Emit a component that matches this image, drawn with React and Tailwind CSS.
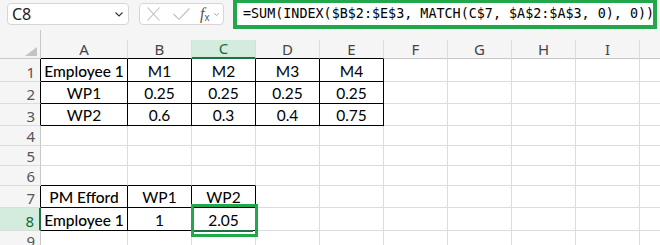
import React from "react";

function Cell({ w, h, text, br, bb, bold }) {
  const rc = br ? "border-r-black" : "border-r-[#dcdcdc]";
  const bc = bb ? "border-b-black" : "border-b-[#dcdcdc]";
  return (
    <div
      className={`${w} ${h} shrink-0 border-r border-b ${rc} ${bc} flex items-end justify-center pb-[2px] leading-none text-[15.5px] text-black whitespace-nowrap ${bold ? "font-medium" : ""}`}
    >
      {text}
    </div>
  );
}

const colW = ["w-[87px]", "w-[64px]", "w-[64px]", "w-[64px]", "w-[64px]", "w-[64px]", "w-[64px]", "w-[64px]", "w-[64px]", "w-[64px]"];
const letters = ["A", "B", "C", "D", "E", "F", "G", "H", "I", ""];

const rows = [
  { n: 1, h: "h-[23px]", vals: ["Employee 1", "M1", "M2", "M3", "M4"], br: 5, bb: 5, lb: true },
  { n: 2, h: "h-[22px]", vals: ["WP1", "0.25", "0.25", "0.25", "0.25"], br: 5, bb: 5, lb: true },
  { n: 3, h: "h-[22px]", vals: ["WP2", "0.6", "0.3", "0.4", "0.75"], br: 5, bb: 5, lb: true },
  { n: 4, h: "h-[20px]", vals: [], br: 0, bb: 0 },
  { n: 5, h: "h-[20px]", vals: [], br: 0, bb: 0 },
  { n: 6, h: "h-[20px]", vals: [], br: 0, bb: 3 },
  { n: 7, h: "h-[22px]", vals: ["PM Efford", "WP1", "WP2"], br: 3, bb: 3, lb: true },
  { n: 8, h: "h-[23px]", vals: ["Employee 1", "1", "2.05"], br: 3, bb: 3, sel: true },
  { n: 9, h: "h-[20px]", vals: [], br: 0, bb: 0 },
];

export default function App() {
  return (
    <div className="w-[660px] h-[245px] overflow-hidden relative bg-white font-['Lato',sans-serif]">
      {/* toolbar */}
      <div className="h-[30px] bg-[#f5f5f5] flex items-start">
        <div className="ml-[7px] mt-[3px] w-[122px] h-[22px] shrink-0 bg-white border border-[#d6d6d6] rounded-[4px] flex items-center justify-between pl-[4px] pr-[5px]">
          <span className="font-['Noto_Sans',sans-serif] text-[16px] text-[#222] leading-none">C8</span>
          <svg width="8" height="5" viewBox="0 0 8 5">
            <path d="M0.5 0.5 L4 4 L7.5 0.5" fill="none" stroke="#333" strokeWidth="1.1" />
          </svg>
        </div>
        <div className="ml-[10px] mt-[3px] w-[85px] h-[22px] shrink-0 bg-white border border-[#d6d6d6] rounded-[4px] flex items-center pl-[7px]">
          <svg width="13" height="14" viewBox="0 0 13 14">
            <path d="M0.5 0.5 L12.5 13.5 M12.5 0.5 L0.5 13.5" stroke="#bdbdbd" strokeWidth="1.1" fill="none" />
          </svg>
          <svg className="ml-[13px]" width="17" height="12" viewBox="0 0 17 12">
            <path d="M0.5 6 L6 11.3 L16.5 0.5" stroke="#bdbdbd" strokeWidth="1.1" fill="none" />
          </svg>
          <span className="ml-[10px] font-['Liberation_Serif',serif] italic text-[16px] leading-none text-[#555]">
            f<span className="text-[10px] not-italic font-['Liberation_Sans',sans-serif] relative top-[2px]">x</span>
          </span>
          <svg className="ml-[5px]" width="5" height="3" viewBox="0 0 5 3">
            <path d="M0.3 0.3 L2.5 2.5 L4.7 0.3" fill="none" stroke="#9a9a9a" strokeWidth="0.9" />
          </svg>
        </div>
        <div className="ml-[9px] -mt-[1px] w-[424px] h-[30px] shrink-0 border-[4px] border-[#22a84b] bg-white flex items-center pl-[6px]">
          <span className="font-['DejaVu_Sans_Mono',monospace] text-[13.4px] text-black whitespace-pre leading-none">
            =SUM(INDEX($B$2:$E$3, MATCH(C$7, $A$2:$A$3, 0), 0))
          </span>
        </div>
      </div>

      {/* column headers */}
      <div className="flex h-[29px] bg-[#f5f5f5]">
        <div className="w-[41px] h-[29px] shrink-0 border-r border-b border-r-[#c8c8c8] border-b-[#c8c8c8] relative">
          <svg className="absolute left-[25px] top-[17px]" width="12" height="9" viewBox="0 0 12 9">
            <path d="M12 0 L12 9 L0 9 Z" fill="#c3c3c3" />
          </svg>
        </div>
        {letters.map((l, i) => {
          const sel = l === "C";
          const dark = i < 5 && !sel;
          return (
            <div
              key={i}
              className={`${colW[i]} shrink-0 mt-[10px] h-[19px] border-r border-r-[#dcdcdc] flex items-center justify-center font-['Noto_Sans',sans-serif] text-[15px] leading-none ${
                sel
                  ? "bg-[#d3ecdd] text-[#0f6a38] border-b-2 border-b-[#1e7145]"
                  : dark
                  ? "text-[#444] border-b border-b-black"
                  : "text-[#444] border-b border-b-[#c8c8c8]"
              }`}
            >
              {l}
            </div>
          );
        })}
      </div>

      {/* rows */}
      {rows.map((r) => (
        <div key={r.n} className="flex">
          <div
            className={`w-[41px] ${r.h} shrink-0 border-b border-b-[#dcdcdc] flex items-end justify-end pr-[5px] pb-[1px] font-['Noto_Sans',sans-serif] text-[15px] leading-none ${
              r.sel
                ? "bg-[#d3ecdd] text-[#0f6a38] border-r-2 border-r-[#1e7145]"
                : r.lb
                ? "bg-[#f5f5f5] text-[#555] border-r border-r-black"
                : "bg-[#f5f5f5] text-[#555] border-r border-r-[#c8c8c8]"
            }`}
          >
            {r.n}
          </div>
          {letters.map((l, i) => (
            <Cell
              key={i}
              w={colW[i]}
              h={r.h}
              text={r.vals[i] || ""}
              br={i < r.br}
              bb={i < r.bb}
              bold={i === 0 && r.vals.length > 0 && (r.n === 1 || r.n === 7 || r.n === 8)}
            />
          ))}
        </div>
      ))}

      {/* selection overlays */}
      <div className="absolute left-[194px] top-[230px] w-[59px] h-[2px] bg-[#1e7145]" />
      <div className="absolute left-[191px] top-[204px] w-[67px] h-[33px] border-[3px] border-[#22a84b]" />
    </div>
  );
}
